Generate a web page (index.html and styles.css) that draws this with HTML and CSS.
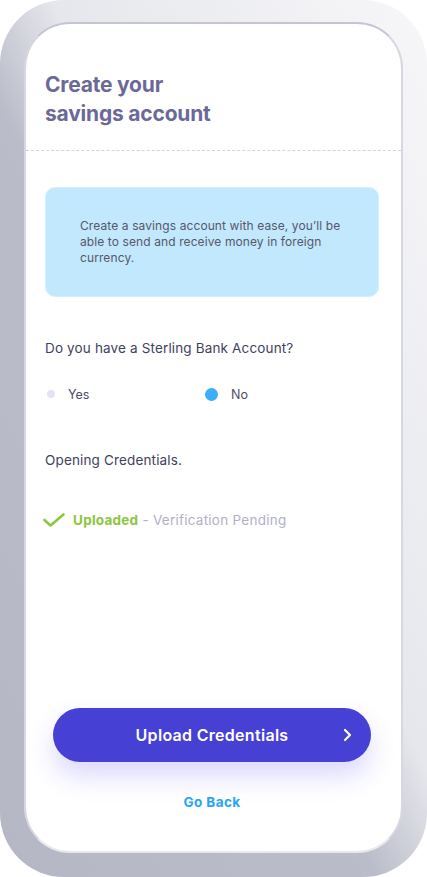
FILE: index.html
```html
<!DOCTYPE html>
<html lang="en">
<head>
<meta charset="utf-8">
<title>Create your savings account</title>
<link rel="stylesheet" href="styles.css">
</head>
<body>
<div class="phone">
  <div class="screen">
    <h1 class="title">Create your<br>savings account</h1>
    <div class="divider"></div>
    <div class="content">
      <div class="info">
        <p>Create a savings account with ease, you’ll be able to send and receive money in foreign currency.</p>
      </div>
      <p class="question">Do you have a Sterling Bank Account?</p>
      <div class="options">
        <label class="option"><span class="dot"></span><span>Yes</span></label>
        <label class="option option-on"><span class="dot dot-on"></span><span>No</span></label>
      </div>
      <p class="question cred">Opening Credentials.</p>
      <div class="status">
        <svg class="check" width="22" height="14" viewBox="0 0 22 14"><path d="M1.5 7 L7.5 12.5 L20.5 1.5" fill="none" stroke="#8cc63f" stroke-width="2.6" stroke-linecap="round" stroke-linejoin="round"/></svg>
        <span class="ok">Uploaded</span><span class="pending">&nbsp;-&nbsp;Verification Pending</span>
      </div>
    </div>
    <div class="footer">
      <button class="cta"><span>Upload Credentials</span>
        <svg class="chev" width="9" height="14" viewBox="0 0 9 14"><path d="M2 2 L7 7 L2 12" fill="none" stroke="#fff" stroke-width="2.2" stroke-linecap="round" stroke-linejoin="round"/></svg>
      </button>
      <a class="back" href="#">Go Back</a>
    </div>
  </div>
</div>
</body>
</html>
```
FILE: styles.css
```css
* { box-sizing: border-box; }
html, body { margin: 0; padding: 0; background: #ffffff; }
body { font-family: Inter, "Open Sans", sans-serif; }

.phone {
  width: 427px;
  height: 877px;
  border-radius: 64px;
  padding: 22px 24px 24px 24px;
  background: linear-gradient(to top right, #b5b7c5 0%, #babcc9 44%, #e6e7ec 56%, #f7f7f9 100%);
}

.screen {
  height: 100%;
  background: #ffffff;
  border-radius: 46px;
  border: 2px solid #d6d7e1;
  border-top-color: #c4c4d4;
  border-bottom-color: #e8e8ec;
  display: flex;
  flex-direction: column;
  overflow: hidden;
}

.title {
  margin: 46px 0 0 19px;
  font-size: 21px;
  line-height: 29px;
  font-weight: 700;
  letter-spacing: -0.2px;
  color: #6b6997;
}

.divider {
  margin-top: 22px;
  border-top: 1px dashed #d4d3ea;
}

.content {
  padding: 0 22px 0 19px;
}

.info {
  margin-top: 36px;
  height: 110px;
  border-radius: 10px;
  background: #c2e8fd;
  border: 1px solid #d3effd;
  padding: 0 30px 0 34px;
  display: flex;
  align-items: center;
}
.info p {
  margin: 0;
  font-size: 12px;
  line-height: 16px;
  letter-spacing: 0.1px;
  color: #565769;
}

.question {
  margin: 41px 0 0 0;
  font-size: 13.5px;
  line-height: 20px;
  letter-spacing: 0.15px;
  color: #3f4160;
}
.cred { margin-top: 46px; }

.options {
  margin-top: 26px;
  display: flex;
  height: 20px;
  align-items: center;
  font-size: 12.5px;
  color: #4b4c68;
}
.option {
  display: flex;
  align-items: center;
  width: 160px;
}
.dot {
  width: 8px;
  height: 8px;
  border-radius: 50%;
  background: #e3e3f5;
  margin: 0 13px 0 2px;
}
.dot-on {
  width: 13px;
  height: 13px;
  background: #3aaff6;
  margin: 0 13px 0 0;
}

.status {
  margin-top: 40px;
  height: 20px;
  display: flex;
  align-items: center;
  font-size: 13.5px;
  letter-spacing: 0.25px;
}
.check { margin: 0 8px 0 -2px; }
.ok { color: #8cc63f; font-weight: 700; }
.pending { color: #b2b0c9; }

.footer {
  margin-top: auto;
  padding-bottom: 39px;
  display: flex;
  flex-direction: column;
  align-items: center;
}
.cta {
  position: relative;
  width: 318px;
  height: 54px;
  margin-left: -3px;
  border: 0;
  border-radius: 27px;
  background: #4640d4;
  color: #ffffff;
  font-family: Inter, sans-serif;
  font-size: 16px;
  font-weight: 600;
  letter-spacing: 0.3px;
  box-shadow: 0 14px 26px rgba(90, 84, 240, 0.22);
  display: flex;
  align-items: center;
  justify-content: center;
}
.chev { position: absolute; right: 19px; top: 20px; }
.back {
  margin-top: 30px;
  margin-left: -3px;
  line-height: 20px;
  font-size: 13.5px;
  font-weight: 700;
  letter-spacing: 0.4px;
  color: #27a6f5;
  text-decoration: none;
}
```
